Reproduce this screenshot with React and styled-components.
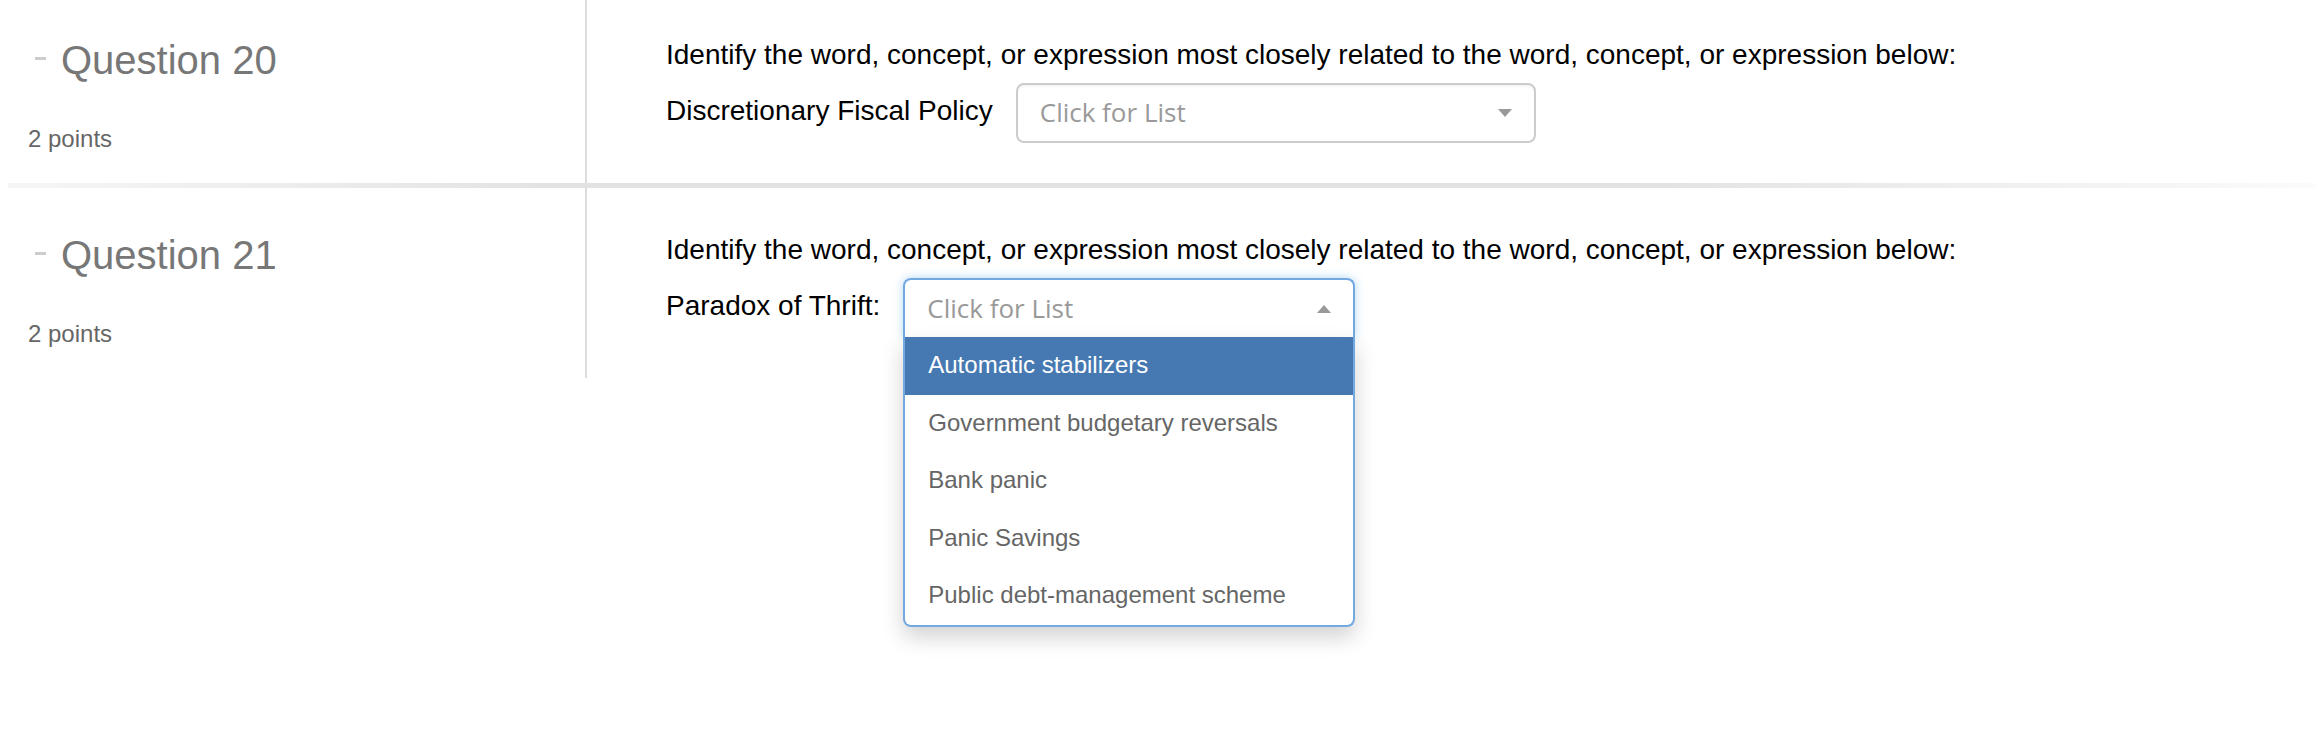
import React from 'react';
import styled, { createGlobalStyle } from 'styled-components';

const GlobalStyle = createGlobalStyle`
  body {
    margin: 0;
    background: #fff;
    font-family: "Liberation Sans", Arial, Helvetica, sans-serif;
  }
`;

// page is scrolled a few pixels past the top of the first question
const Quiz = styled.main`
  min-height: 100vh;
  margin-top: -7px;
`;

const QuestionRow = styled.section`
  display: grid;
  grid-template-columns: 587px 1fr;
  height: 190px;
`;

const Separator = styled.div`
  height: 5px;
  margin-left: 8px;
  background: linear-gradient(to right, #f6f6f6 0%, #e2e2e2 25%, #e2e2e2 70%, #fbfbfb 100%);
`;

const Meta = styled.div`
  border-right: 2px solid #ddd;
  padding: 43px 0 0 28px;
`;

const Title = styled.h2`
  display: flex;
  align-items: center;
  margin: 0;
  font-size: 40px;
  line-height: 48px;
  font-weight: 400;
  color: #777;
`;

const Toggle = styled.span`
  width: 11px;
  height: 3px;
  margin: 0 15px 4px 7px;
  background: #ccc;
`;

const Points = styled.div`
  margin-top: 41px;
  font-size: 24px;
  line-height: 28.8px;
  color: #666;
`;

const Body = styled.div`
  padding: 42px 0 0 79px;
`;

const Prompt = styled.p`
  margin: 0;
  font-size: 28px;
  line-height: 40px;
  color: #000;
`;

const Answer = styled.div`
  display: flex;
  align-items: flex-start;
  gap: 23px;
  margin-top: 8px;
`;

const Label = styled.span`
  padding-top: 8px;
  font-size: 28px;
  line-height: 40px;
  color: #000;
`;

const SelectWrap = styled.div`
  position: relative;
  width: ${({ $width }) => $width}px;
`;

const Trigger = styled.div`
  display: flex;
  align-items: center;
  justify-content: space-between;
  box-sizing: border-box;
  height: ${({ $open }) => ($open ? 59 : 60)}px;
  padding: 0 22px 2px 22px;
  background: #fff;
  border: 2px solid ${({ $open }) => ($open ? '#74a9e0' : '#ccc')};
  border-bottom-width: ${({ $open }) => ($open ? 0 : 2)}px;
  border-radius: ${({ $open }) => ($open ? '8px 8px 0 0' : '8px')};
  box-shadow: ${({ $open }) =>
    $open ? '0 0 10px rgba(102, 175, 233, 0.5)' : 'inset 0 2px 2px rgba(0, 0, 0, 0.04)'};
  font-family: "Open Sans", "DejaVu Sans", sans-serif;
  font-size: 26px;
  color: #999;
`;

const Caret = styled.span`
  width: 0;
  height: 0;
  border-left: 7.5px solid transparent;
  border-right: 7.5px solid transparent;
  ${({ $up }) => ($up ? 'border-bottom' : 'border-top')}: 8px solid #999;
  margin-top: 2px;
`;

const Menu = styled.ul`
  position: absolute;
  top: 100%;
  left: 0;
  right: 0;
  z-index: 2;
  margin: 0;
  padding: 0;
  list-style: none;
  background: #fff;
  border: 2px solid #74a9e0;
  border-top: 0;
  border-radius: 0 0 8px 8px;
  box-shadow: 0 10px 22px rgba(0, 0, 0, 0.18);
`;

const Option = styled.li`
  padding: 14px 23px 15.6px;
  font-size: 24px;
  line-height: 28px;
  background: ${({ $active }) => ($active ? '#4679b1' : 'transparent')};
  color: ${({ $active }) => ($active ? '#fff' : '#666')};
`;

const questions = [
  {
    number: 20,
    term: 'Discretionary Fiscal Policy',
    width: 520,
    open: false,
  },
  {
    number: 21,
    term: 'Paradox of Thrift:',
    width: 452,
    open: true,
    options: [
      'Automatic stabilizers',
      'Government budgetary reversals',
      'Bank panic',
      'Panic Savings',
      'Public debt-management scheme',
    ],
  },
];

const Select = ({ width, open, options = [] }) => (
  <SelectWrap $width={width}>
    <Trigger $open={open}>
      <span>Click for List</span>
      <Caret $up={open} />
    </Trigger>
    {open && (
      <Menu>
        {options.map((opt, i) => (
          <Option key={opt} $active={i === 0}>{opt}</Option>
        ))}
      </Menu>
    )}
  </SelectWrap>
);

const App = () => (
  <>
    <GlobalStyle />
    <Quiz>
      {questions.map((q, i) => (
        <React.Fragment key={q.number}>
          {i > 0 && <Separator />}
          <QuestionRow>
            <Meta>
              <Title>
                <Toggle />
                Question {q.number}
              </Title>
              <Points>2 points</Points>
            </Meta>
            <Body>
              <Prompt>
                Identify the word, concept, or expression most closely related to the word, concept, or expression below:
              </Prompt>
              <Answer>
                <Label>{q.term}</Label>
                <Select width={q.width} open={q.open} options={q.options} />
              </Answer>
            </Body>
          </QuestionRow>
        </React.Fragment>
      ))}
    </Quiz>
  </>
);

export default App;
